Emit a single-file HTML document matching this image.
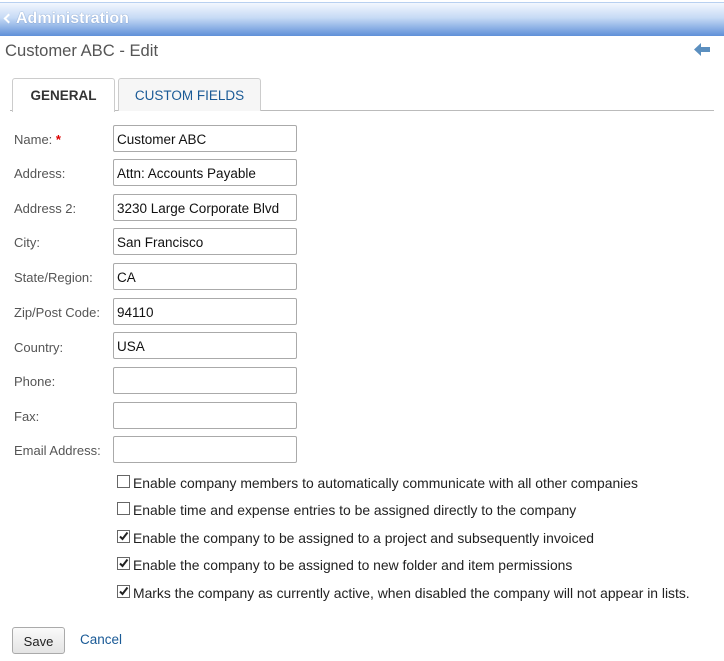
<!DOCTYPE html>
<html><head><meta charset="utf-8"><style>
*{box-sizing:border-box}
body{margin:0;width:724px;height:661px;background:#fff;font-family:"Liberation Sans",sans-serif;font-size:13px;color:#222;position:relative;overflow:hidden}
.hdr{position:absolute;left:0;top:2px;width:724px;height:34px;border-top:1px solid #b8d0f0;background:linear-gradient(#f2f7fe,#c6daf5 45%,#5f90d8);}
.hdr span{position:absolute;left:16px;top:7px;color:#fff;font-weight:bold;font-size:16px;text-shadow:0 0 1px #4a72b0}
.hdr i{position:absolute;left:5px;top:12px;width:7px;height:7px;border-left:2px solid #fff;border-bottom:2px solid #fff;transform:rotate(45deg)}
.title{position:absolute;left:5px;top:41px;font-size:16.6px;color:#555}
.tabline{position:absolute;left:10px;top:110px;width:704px;height:1px;background:#bbb}
.tab{position:absolute;top:78px;height:33px;border:1px solid #ccc;border-bottom:none;border-radius:3px 3px 0 0;text-align:center;line-height:34px;font-size:13.5px}
.lbl{position:absolute;left:14px;color:#555;font-size:13px}
.inp{position:absolute;left:113px;width:184px;height:27px;border:1px solid #aaa;border-radius:2px;padding:6px 0 0 3px;font-size:13.5px;color:#111}
.cb{position:absolute;left:117px;width:13px;height:13px;border:1px solid #666;background:#fff}
.cb svg{position:absolute;left:0;top:0}
.ct{position:absolute;left:133px;font-size:13.9px;color:#222}
.btn{position:absolute;left:12px;top:627px;width:53px;height:27px;border:1px solid #aaa;border-radius:3px;background:linear-gradient(#fafafa,#e4e4e4);text-align:center;line-height:28px;font-size:13px}
</style></head><body>
<div class="hdr"><i></i><span>Administration</span></div>
<div class="title">Customer ABC - Edit</div>
<svg style="position:absolute;left:693px;top:41px" width="18" height="17" viewBox="0 0 18 17"><path d="M1 8.5 L8 2 L8 6 L17 6 L17 11 L8 11 L8 15 Z" fill="#5b8fbf"/></svg>
<div class="tabline"></div>
<div class="tab" style="left:12px;width:103px;background:#fff;height:34px;font-weight:bold;color:#333">GENERAL</div>
<div class="tab" style="left:118px;width:143px;background:#f6f6f6;color:#1a5a96">CUSTOM FIELDS</div>

<div class="lbl" style="top:132px">Name: <b style="color:#d00">*</b></div>
<div class="lbl" style="top:166px">Address:</div>
<div class="lbl" style="top:201px">Address 2:</div>
<div class="lbl" style="top:235px">City:</div>
<div class="lbl" style="top:270px">State/Region:</div>
<div class="lbl" style="top:305px">Zip/Post Code:</div>
<div class="lbl" style="top:340px">Country:</div>
<div class="lbl" style="top:374px">Phone:</div>
<div class="lbl" style="top:409px">Fax:</div>
<div class="lbl" style="top:443px">Email Address:</div>

<div class="inp" style="top:125px">Customer ABC</div>
<div class="inp" style="top:159px">Attn: Accounts Payable</div>
<div class="inp" style="top:194px">3230 Large Corporate Blvd</div>
<div class="inp" style="top:228px">San Francisco</div>
<div class="inp" style="top:263px">CA</div>
<div class="inp" style="top:298px">94110</div>
<div class="inp" style="top:332px">USA</div>
<div class="inp" style="top:367px"></div>
<div class="inp" style="top:402px"></div>
<div class="inp" style="top:436px"></div>

<div class="cb" style="top:475px"></div><div class="ct" style="top:475px">Enable company members to automatically communicate with all other companies</div>
<div class="cb" style="top:502px"></div><div class="ct" style="top:502px">Enable time and expense entries to be assigned directly to the company</div>
<div class="cb" style="top:530px"><svg width="11" height="11"><path d="M2 5.5 L4.5 8 L9.5 1.5" stroke="#222" stroke-width="2" fill="none"/></svg></div><div class="ct" style="top:530px">Enable the company to be assigned to a project and subsequently invoiced</div>
<div class="cb" style="top:557px"><svg width="11" height="11"><path d="M2 5.5 L4.5 8 L9.5 1.5" stroke="#222" stroke-width="2" fill="none"/></svg></div><div class="ct" style="top:557px">Enable the company to be assigned to new folder and item permissions</div>
<div class="cb" style="top:585px"><svg width="11" height="11"><path d="M2 5.5 L4.5 8 L9.5 1.5" stroke="#222" stroke-width="2" fill="none"/></svg></div><div class="ct" style="top:585px">Marks the company as currently active, when disabled the company will not appear in lists.</div>

<div class="btn">Save</div>
<div style="position:absolute;left:80px;top:632px;color:#1a5a96;font-size:13.5px">Cancel</div>
</body></html>
